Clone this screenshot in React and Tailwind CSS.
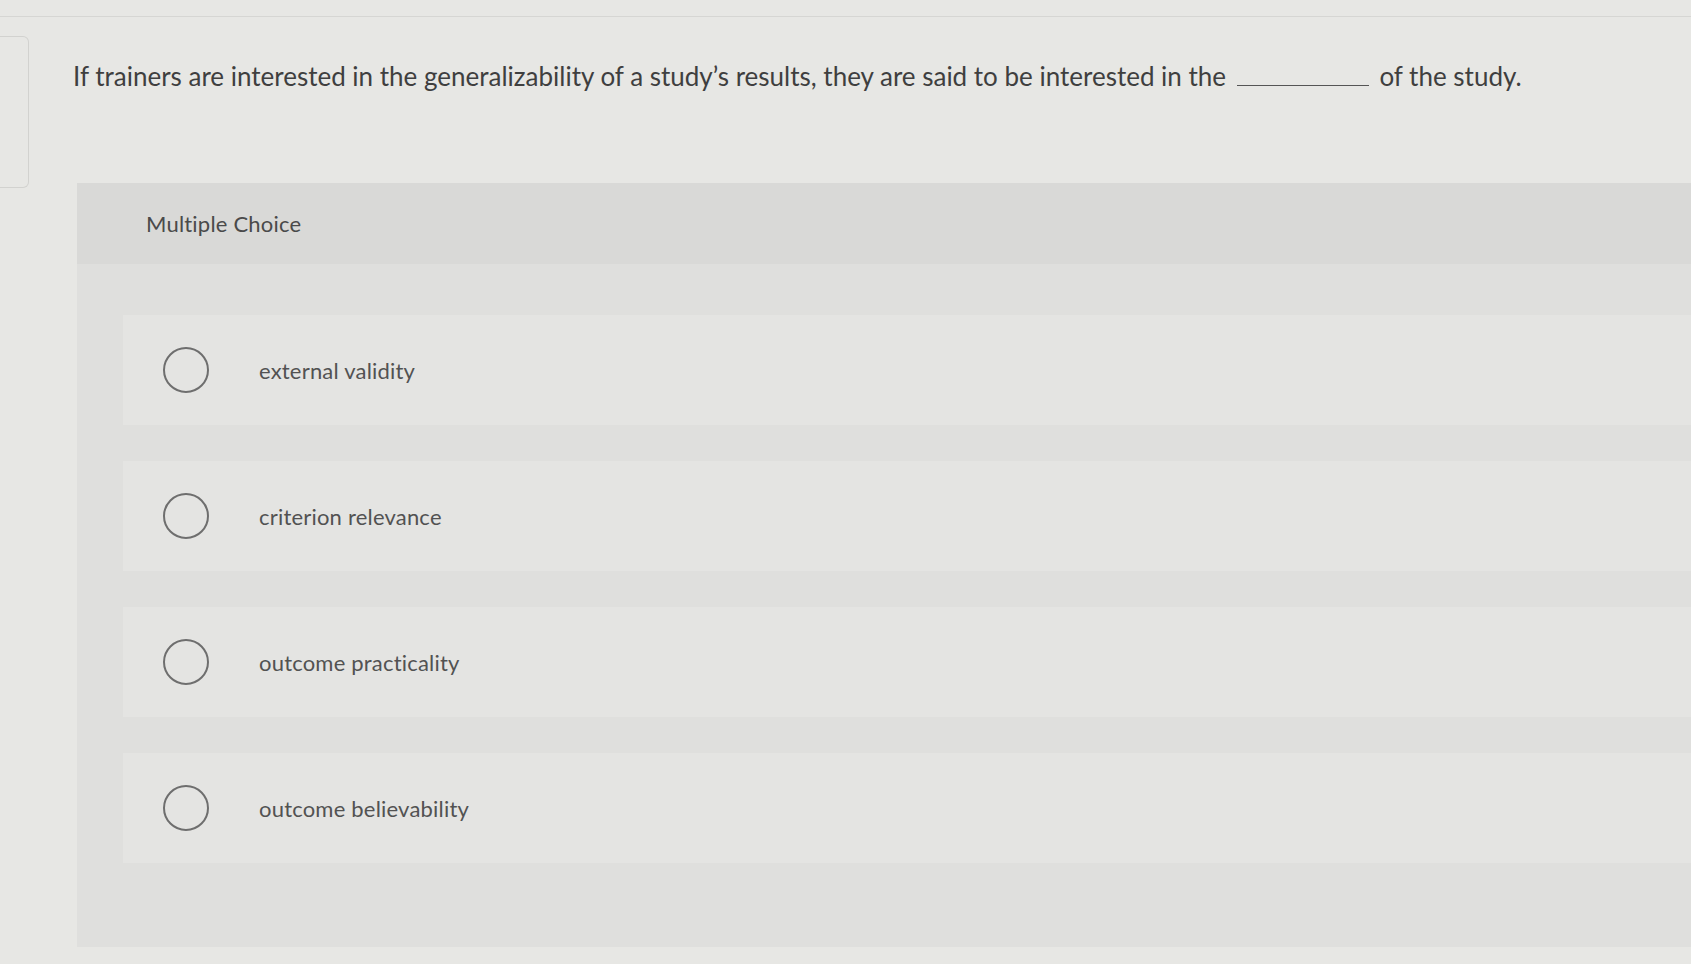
import { useState } from "react";

const OPTIONS = [
  "external validity",
  "criterion relevance",
  "outcome practicality",
  "outcome believability",
];

export default function App() {
  const [selected, setSelected] = useState(null);

  return (
    <div className="min-h-screen bg-[#e7e7e4] font-['Lato','Liberation_Sans',sans-serif] overflow-hidden">
      {/* top rule */}
      <div className="h-[17px] border-b border-[#d6d6d3]" />

      <div className="flex">
        {/* clipped side box */}
        <div className="w-[29px] h-[152px] mt-[19px] shrink-0 border border-l-0 border-[#d2d2cf] rounded-r-md" />

        <div className="flex-1 pl-[44px]">
          {/* question */}
          <p className="mt-[43px] text-[26px] leading-[32px] text-[#3f3f3f] whitespace-nowrap">
            If trainers are interested in the generalizability of a study’s results, they are said to be interested in the{" "}
            <span className="inline-block w-[132px] mx-[4px] border-b-[1.5px] border-[#555] align-baseline" />{" "}
            of the study.
          </p>

          {/* multiple choice panel */}
          <div className="mt-[91px] ml-[4px] bg-[#dfdfdd] pb-[84px]">
            <div className="h-[81px] bg-[#d9d9d7] flex items-center pl-[69px]">
              <span className="text-[22px] tracking-[0.2px] text-[#4a4a4a]">Multiple Choice</span>
            </div>

            <div className="pt-[51px] pl-[46px] flex flex-col gap-[36px]">
              {OPTIONS.map((opt, i) => (
                <button
                  key={opt}
                  onClick={() => setSelected(i)}
                  className="h-[110px] bg-[#e4e4e2] flex items-center pl-[40px] text-left"
                >
                  <span className="w-[46px] h-[46px] shrink-0 rounded-full border-2 border-[#6e6e6e] flex items-center justify-center">
                    {selected === i && <span className="w-[24px] h-[24px] rounded-full bg-[#555]" />}
                  </span>
                  <span className="ml-[50px] text-[22px] tracking-[0.2px] text-[#525252]">{opt}</span>
                </button>
              ))}
            </div>
          </div>
        </div>
      </div>
    </div>
  );
}
